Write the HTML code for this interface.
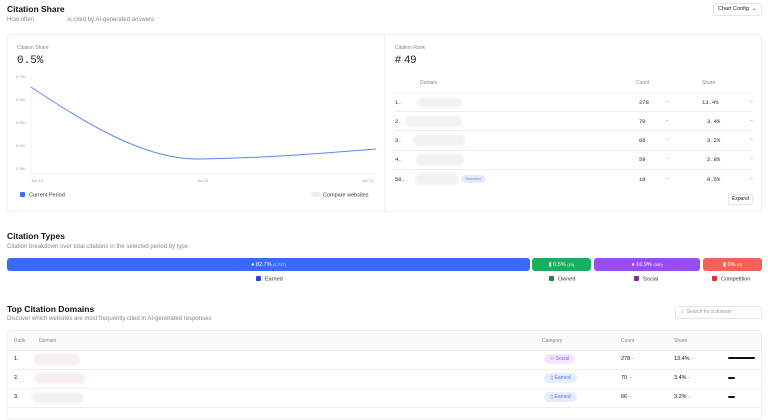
<!DOCTYPE html>
<html><head><style>
*{margin:0;padding:0;box-sizing:border-box}
body{width:768px;height:411px;overflow:hidden;background:#fff;font-family:"Liberation Sans",sans-serif;color:#111;position:relative}
.a{position:absolute;white-space:nowrap}
.h{font-weight:bold;font-size:8.5px}
.s{font-size:6px;color:#888}
.t{font-size:5px;color:#888}
.m{font-family:"Liberation Mono",monospace;font-size:5.5px;color:#222}
.blur{position:absolute;height:9px;border-radius:5px;background:#f4f1f1;filter:blur(1px)}
.sep{position:absolute;height:1px;background:#eee}
.sq{display:inline-block;width:5px;height:5px;border-radius:1px;vertical-align:-0.5px;margin-right:4px}
</style></head><body>
<div class="a h" style="left:7px;top:4px">Citation Share</div>
<div class="a s" style="left:7px;top:17px">How often <span style="display:inline-block;width:30px"></span> is cited by AI-generated answers</div>
<div class="a" style="left:713px;top:3px;width:49px;height:13px;border:1px solid #e5e5e5;border-radius:3px;font-size:5.5px;line-height:11px;padding-left:4px;color:#222">Chart Config &nbsp;⌄</div>

<div class="a" style="left:7px;top:34px;width:755px;height:178px;border:1px solid #eee;border-radius:4px"></div>
<div class="a" style="left:384px;top:35px;width:1px;height:176px;background:#eee"></div>

<div class="a t" style="left:17px;top:45px">Citation Share</div>
<div class="a" style="left:17px;top:55px;font-size:11px;font-family:'Liberation Mono',monospace;color:#222">0.5%</div>
<svg class="a" style="left:14px;top:72px" width="366" height="115">
<g fill="#999" font-size="4" font-family="Liberation Sans">
<text x="2" y="6">0.7%</text><text x="2" y="29">0.6%</text><text x="2" y="52">0.5%</text><text x="2" y="75">0.4%</text><text x="2" y="98">0.3%</text>
<text x="17" y="110">Jun 10</text><text x="183" y="110">Jun 11</text><text x="348" y="110">Jun 12</text></g>
<line x1="17" y1="2" x2="17" y2="102" stroke="#eee" stroke-width=".6"/>
<line x1="17" y1="102" x2="362" y2="102" stroke="#eee" stroke-width=".6"/>
<path d="M17 15 C70 50,130 88,185 87 C250 86,300 82,362 77" fill="none" stroke="#5b86f5" stroke-width="1"/>
</svg>
<div class="a" style="left:20px;top:192px;font-size:5.5px;color:#333"><span class="sq" style="background:#3b6ef5"></span>Current Period</div>
<div class="a" style="left:311px;top:192px;font-size:5.5px;color:#333"><span style="display:inline-block;width:9px;height:5px;border-radius:3px;background:#eee;vertical-align:-0.5px;margin-right:3px"></span>Compare websites</div>

<div class="a t" style="left:395px;top:45px">Citation Rank</div>
<div class="a" style="left:395px;top:54px;font-size:11px;color:#222">#&nbsp;49</div>
<div class="a t" style="left:420px;top:80px">Domain</div>
<div class="a t" style="left:636px;top:80px">Count</div>
<div class="a t" style="left:702px;top:80px">Share</div>
<div class="sep" style="left:394px;top:92px;width:358px"></div>
<div class="sep" style="left:394px;top:111px;width:358px"></div>
<div class="sep" style="left:394px;top:130px;width:358px"></div>
<div class="sep" style="left:394px;top:150px;width:358px"></div>
<div class="sep" style="left:394px;top:169px;width:358px"></div>
<div class="a m" style="left:395px;top:99px">1.</div><div class="blur" style="left:417px;top:98px;width:45px"></div>
<div class="a m" style="left:639px;top:99px">278</div><div class="a t" style="left:666px;top:99px">–</div><div class="a m" style="left:702px;top:99px">13.4%</div><div class="a t" style="left:750px;top:99px">–</div>
<div class="a m" style="left:395px;top:118px">2.</div><div class="blur" style="left:405px;top:116px;width:57px;height:11px"></div>
<div class="a m" style="left:639px;top:118px">70</div><div class="a t" style="left:666px;top:118px">–</div><div class="a m" style="left:707px;top:118px">3.4%</div><div class="a t" style="left:750px;top:118px">–</div>
<div class="a m" style="left:395px;top:137px">3.</div><div class="blur" style="left:413px;top:135px;width:52px;height:11px"></div>
<div class="a m" style="left:639px;top:137px">66</div><div class="a t" style="left:666px;top:137px">–</div><div class="a m" style="left:707px;top:137px">3.2%</div><div class="a t" style="left:750px;top:137px">–</div>
<div class="a m" style="left:395px;top:156px">4.</div><div class="blur" style="left:416px;top:154px;width:48px;height:11px"></div>
<div class="a m" style="left:639px;top:156px">59</div><div class="a t" style="left:666px;top:156px">–</div><div class="a m" style="left:707px;top:156px">2.8%</div><div class="a t" style="left:750px;top:156px">–</div>
<div class="a m" style="left:395px;top:176px">50.</div><div class="blur" style="left:415px;top:173px;width:44px;height:12px"></div>
<div class="a" style="left:461px;top:175px;width:24px;height:8px;border-radius:4px;background:#e4ebfd;color:#5b7ef0;font-size:4px;line-height:8px;text-align:center">Selected</div>
<div class="a m" style="left:639px;top:176px">10</div><div class="a t" style="left:666px;top:176px">–</div><div class="a m" style="left:707px;top:176px">0.5%</div><div class="a t" style="left:750px;top:176px">–</div>
<div class="a" style="left:728px;top:194px;width:25px;height:11px;border:1px solid #e5e5e5;border-radius:3px;font-size:5px;line-height:9px;text-align:center;color:#222">Expand</div>

<div class="a h" style="left:7px;top:231px">Citation Types</div>
<div class="a s" style="left:7px;top:244px">Citation breakdown over total citations in the selected period by type</div>
<div class="a" style="left:7px;top:258px;width:523px;height:13px;background:#386bfb;border-radius:3px;color:#fff;font-size:5.5px;line-height:13px;text-align:center">● 82.7% <span style="font-size:4px">(1,717)</span></div>
<div class="a" style="left:532px;top:258px;width:59px;height:13px;background:#17b060;border-radius:3px;color:#fff;font-size:5.5px;line-height:13px;text-align:center">▮ 0.5% <span style="font-size:4px">(10)</span></div>
<div class="a" style="left:594px;top:258px;width:106px;height:13px;background:#9a4cf6;border-radius:3px;color:#fff;font-size:5.5px;line-height:13px;text-align:center">● 16.9% <span style="font-size:4px">(350)</span></div>
<div class="a" style="left:703px;top:258px;width:59px;height:13px;background:#f66057;border-radius:3px;color:#fff;font-size:5.5px;line-height:13px;text-align:center">▮ 0% <span style="font-size:4px">(0)</span></div>
<div class="a" style="left:256px;top:276px;font-size:5.5px;color:#333"><span class="sq" style="background:#2a40e8"></span>Earned</div>
<div class="a" style="left:549px;top:276px;font-size:5.5px;color:#333"><span class="sq" style="background:#1a8a3a"></span>Owned</div>
<div class="a" style="left:634px;top:276px;font-size:5.5px;color:#333"><span class="sq" style="background:#8a2a9a"></span>Social</div>
<div class="a" style="left:712px;top:276px;font-size:5.5px;color:#333"><span class="sq" style="background:#e82a2a"></span>Competition</div>

<div class="a h" style="left:7px;top:304px">Top Citation Domains</div>
<div class="a s" style="left:7px;top:316px">Discover which websites are most frequently cited in AI-generated responses</div>
<div class="a" style="left:675px;top:306px;width:87px;height:13px;border:1px solid #e5e5e5;border-radius:3px;font-size:5px;line-height:11px;padding-left:5px;color:#999">⌕ &nbsp;Search for a domain</div>
<div class="a" style="left:7px;top:330px;width:755px;height:90px;border:1px solid #eee;border-radius:4px;background:#fff"></div>
<div class="a" style="left:8px;top:331px;width:753px;height:19px;background:#fafafa;border-radius:4px 4px 0 0"></div>
<div class="a t" style="left:14px;top:338px">Rank</div>
<div class="a t" style="left:39px;top:338px">Domain</div>
<div class="a t" style="left:542px;top:338px">Category</div>
<div class="a t" style="left:621px;top:338px">Count</div>
<div class="a t" style="left:674px;top:338px">Share</div>
<div class="sep" style="left:8px;top:350px;width:753px"></div>
<div class="sep" style="left:8px;top:369px;width:753px"></div>
<div class="sep" style="left:8px;top:388px;width:753px"></div>
<div class="sep" style="left:8px;top:407px;width:753px"></div>
<div class="a" style="left:14px;top:356px;font-size:5.5px">1.</div><div class="blur" style="left:34px;top:354px;width:46px;height:11px;background:#f7eeee"></div>
<div class="a" style="left:544px;top:354px;width:31px;height:10px;border-radius:5px;background:#f1e8fd;color:#9a4cf6;font-size:5px;line-height:10px;text-align:center">⚇ Social</div>
<div class="a" style="left:621px;top:356px;font-size:5.5px">278 <span style="color:#999">–</span></div>
<div class="a" style="left:674px;top:356px;font-size:5.5px">13.4% <span style="color:#999">–</span></div>
<div class="a" style="left:728px;top:357px;width:27px;height:2px;background:#111;border-radius:1px"></div>
<div class="a" style="left:14px;top:375px;font-size:5.5px">2.</div><div class="blur" style="left:35px;top:373px;width:50px;height:11px;background:#f7eeee"></div>
<div class="a" style="left:544px;top:373px;width:33px;height:10px;border-radius:5px;background:#e6edfd;color:#4b74f0;font-size:5px;line-height:10px;text-align:center">▯ Earned</div>
<div class="a" style="left:621px;top:375px;font-size:5.5px">70 <span style="color:#999">–</span></div>
<div class="a" style="left:674px;top:375px;font-size:5.5px">3.4% <span style="color:#999">–</span></div>
<div class="a" style="left:728px;top:377px;width:7px;height:2px;background:#111;border-radius:1px"></div>
<div class="a" style="left:14px;top:394px;font-size:5.5px">3.</div><div class="blur" style="left:31px;top:392px;width:53px;height:11px;background:#f4f1f1"></div>
<div class="a" style="left:544px;top:392px;width:33px;height:10px;border-radius:5px;background:#e6edfd;color:#4b74f0;font-size:5px;line-height:10px;text-align:center">▯ Earned</div>
<div class="a" style="left:621px;top:394px;font-size:5.5px">66 <span style="color:#999">–</span></div>
<div class="a" style="left:674px;top:394px;font-size:5.5px">3.2% <span style="color:#999">–</span></div>
<div class="a" style="left:728px;top:396px;width:7px;height:2px;background:#111;border-radius:1px"></div>
</body></html>
